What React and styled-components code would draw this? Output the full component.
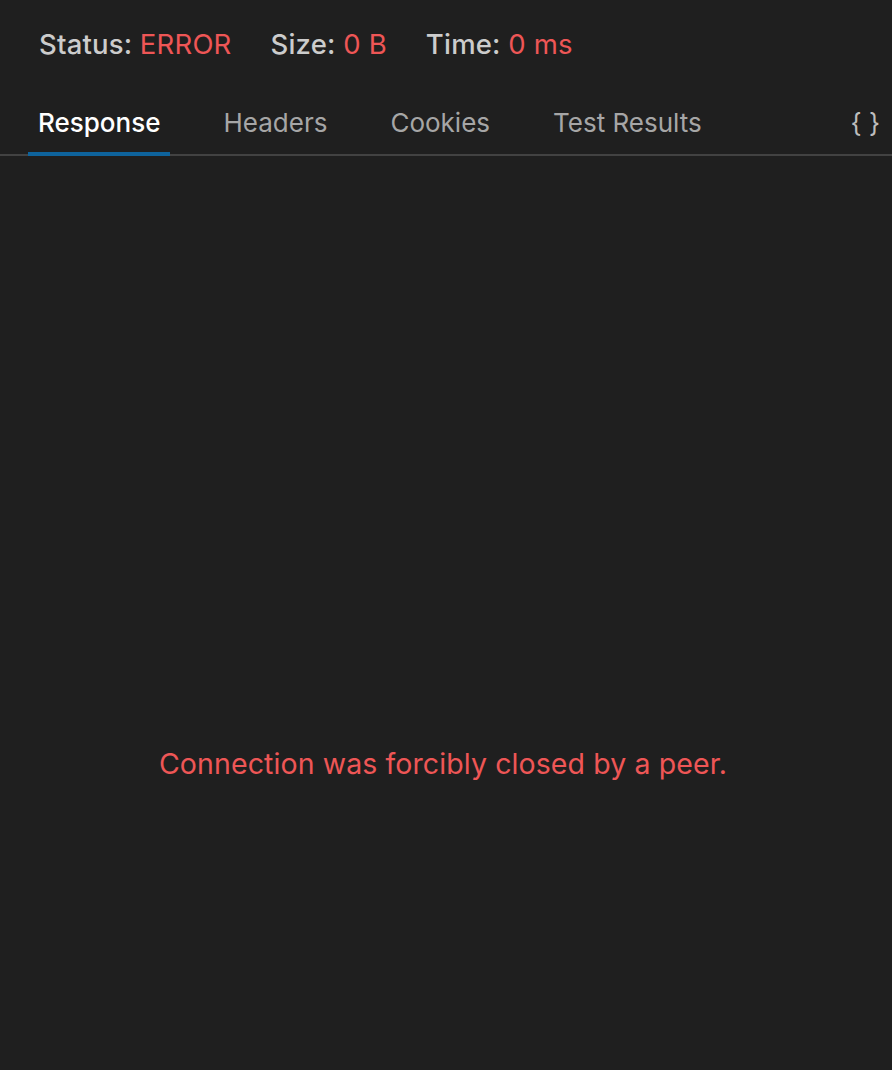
import React from "react";
import styled, { createGlobalStyle } from "styled-components";

const GlobalStyle = createGlobalStyle`
  html, body {
    margin: 0;
    padding: 0;
    background: #1f1f1f;
  }
  body {
    font-family: Inter, "Noto Sans", Roboto, sans-serif;
    -webkit-font-smoothing: antialiased;
  }
`;

const tabs = ["Response", "Headers", "Cookies", "Test Results"];

const App = () => {
  return (
    <Page>
      <GlobalStyle />
      <StatusBar>
        <StatusItem>
          Status: <Value>ERROR</Value>
        </StatusItem>
        <StatusItem>
          Size: <Value>0 B</Value>
        </StatusItem>
        <StatusItem>
          Time: <Value>0 ms</Value>
        </StatusItem>
      </StatusBar>
      <TabBar>
        <TabList>
          {tabs.map((t, i) => (
            <Tab key={t} active={i === 0}>
              {t}
            </Tab>
          ))}
        </TabList>
        <Braces>{"{ }"}</Braces>
      </TabBar>
      <Body>
        <ErrorMessage>Connection was forcibly closed by a peer.</ErrorMessage>
      </Body>
    </Page>
  );
};

export default App;

const Page = styled.div`
  display: flex;
  flex-direction: column;
  min-height: 1070px;
  background: #1f1f1f;
`;

const StatusBar = styled.div`
  display: flex;
  align-items: center;
  gap: 39px;
  padding: 26px 39px 0;
  height: 36px;
`;

const StatusItem = styled.div`
  font-size: 27.5px;
  font-weight: 500;
  color: #cccccc;
  white-space: pre;
  letter-spacing: 0.2px;
`;

const Value = styled.span`
  color: #ee5656;
  font-weight: 400;
`;

const TabBar = styled.div`
  display: flex;
  align-items: stretch;
  justify-content: space-between;
  margin-top: 45px;
  border-bottom: 2px solid #424242;
  padding-left: 28px;
  padding-right: 12px;
`;

const TabList = styled.div`
  display: flex;
  gap: 43px;
`;

const Tab = styled.div`
  padding: 0 10px 14px;
  font-size: 26px;
  font-weight: ${(p) => (p.active ? 500 : 400)};
  color: ${(p) => (p.active ? "#ffffff" : "#a6a6a6")};
  border-bottom: 4px solid ${(p) => (p.active ? "#0e639c" : "transparent")};
  margin-bottom: -2px;
`;

const Braces = styled.div`
  font-size: 26px;
  color: #bdbdbd;
  padding-bottom: 14px;
`;

const Body = styled.div`
  flex: 1;
  display: flex;
  justify-content: center;
  padding-top: 590px;
`;

const ErrorMessage = styled.div`
  font-size: 28.5px;
  color: #ee5656;
  letter-spacing: 0.1px;
  margin-right: 6px;
`;
